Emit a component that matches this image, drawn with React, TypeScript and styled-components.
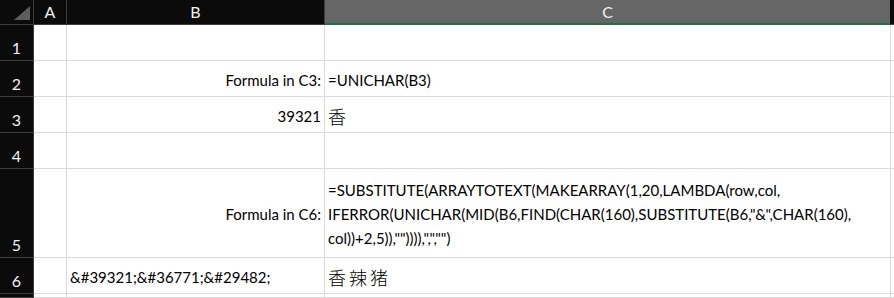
import React from "react";
import styled, { createGlobalStyle, css } from "styled-components";

const Global = createGlobalStyle`
  html, body { margin: 0; padding: 0; background: #ffffff; }
  body { font-family: "Lato", "Noto Sans", sans-serif; }
`;

const Sheet = styled.div`
  display: grid;
  grid-template-columns: 34px 33px 258px 566px 1fr;
  grid-template-rows: 25px 36px 36px 36px 36px 89px 36px 1fr;
  width: 894px;
  height: 298px;
  overflow: hidden;
  background: #ffffff;
`;

const Corner = styled.div`
  background: #0b0b0b;
  border-right: 1px solid #3c3c3c;
  border-bottom: 1px solid #3c3c3c;
  display: flex;
  align-items: flex-end;
  justify-content: flex-end;
  padding: 0 3px 4px 0;
`;

const ColHead = styled.div<{ $active?: boolean }>`
  background: ${(p) => (p.$active ? "#666666" : "#0b0b0b")};
  color: #f2f2f2;
  font-family: "Lato", "Noto Sans", sans-serif;
  font-size: 16px;
  display: flex;
  align-items: center;
  justify-content: center;
  padding-bottom: 1px;
  border-right: 1px solid ${(p) => (p.$active ? "#0b0b0b" : "#3c3c3c")};
  ${(p) =>
    p.$active
      ? css`border-bottom: 2px solid #217346;`
      : css`border-bottom: 1px solid #3c3c3c;`}
`;

const RowHead = styled.div`
  background: #0b0b0b;
  color: #f2f2f2;
  font-family: "Lato", "Noto Sans", sans-serif;
  font-size: 16px;
  display: flex;
  align-items: flex-end;
  justify-content: center;
  padding-bottom: 3px;
  border-right: 1px solid #3c3c3c;
  border-bottom: 1px solid #3c3c3c;
`;

const Cell = styled.div<{ $align?: "left" | "right" }>`
  border-right: 1px solid #dadada;
  border-bottom: 1px solid #dadada;
  color: #000000;
  font-family: "Lato", "Noto Sans", sans-serif;
  font-size: 15px;
  display: flex;
  flex-direction: column;
  justify-content: center;
  align-items: ${(p) => (p.$align === "right" ? "flex-end" : "flex-start")};
  padding: 2px 3px 0 3px;
  white-space: nowrap;
  overflow: hidden;
`;

const Edge = styled.div`
  border-bottom: 1px solid #dadada;
`;

const HeadEdge = styled.div`
  background: #0b0b0b;
  border-bottom: 1px solid #3c3c3c;
`;

const Line = styled.div`
  line-height: 24px;
`;

const Cjk = styled.span`
  font-family: "Noto Sans CJK JP", "Noto Sans CJK SC", sans-serif;
  font-weight: 300;
  font-size: 18px;
  letter-spacing: 3px;
  line-height: 24px;
`;

const Triangle = () => (
  <svg width="16" height="14" viewBox="0 0 16 14">
    <polygon points="16,0 16,14 0,14" fill="#5e5e5e" />
  </svg>
);

const cols = ["A", "B", "C"];

export default function App() {
  return (
    <>
      <Global />
      <Sheet>
        <Corner>
          <Triangle />
        </Corner>
        {cols.map((c) => (
          <ColHead key={c} $active={c === "C"}>
            {c}
          </ColHead>
        ))}
        <HeadEdge />

        <RowHead>1</RowHead>
        <Cell />
        <Cell />
        <Cell />
        <Edge />

        <RowHead>2</RowHead>
        <Cell />
        <Cell $align="right">Formula in C3:</Cell>
        <Cell>=UNICHAR(B3)</Cell>
        <Edge />

        <RowHead>3</RowHead>
        <Cell />
        <Cell $align="right">39321</Cell>
        <Cell>
          <Cjk>香</Cjk>
        </Cell>
        <Edge />

        <RowHead>4</RowHead>
        <Cell />
        <Cell />
        <Cell />
        <Edge />

        <RowHead>5</RowHead>
        <Cell />
        <Cell $align="right">Formula in C6:</Cell>
        <Cell>
          <Line>=SUBSTITUTE(ARRAYTOTEXT(MAKEARRAY(1,20,LAMBDA(row,col,</Line>
          <Line>IFERROR(UNICHAR(MID(B6,FIND(CHAR(160),SUBSTITUTE(B6,"&amp;",CHAR(160),</Line>
          <Line>col))+2,5)),"")))),",","")</Line>
        </Cell>
        <Edge />

        <RowHead>6</RowHead>
        <Cell />
        <Cell>&amp;#39321;&amp;#36771;&amp;#29482;</Cell>
        <Cell>
          <Cjk>香辣猪</Cjk>
        </Cell>
        <Edge />

        <RowHead />
        <Cell />
        <Cell />
        <Cell />
        <Edge />
      </Sheet>
    </>
  );
}
